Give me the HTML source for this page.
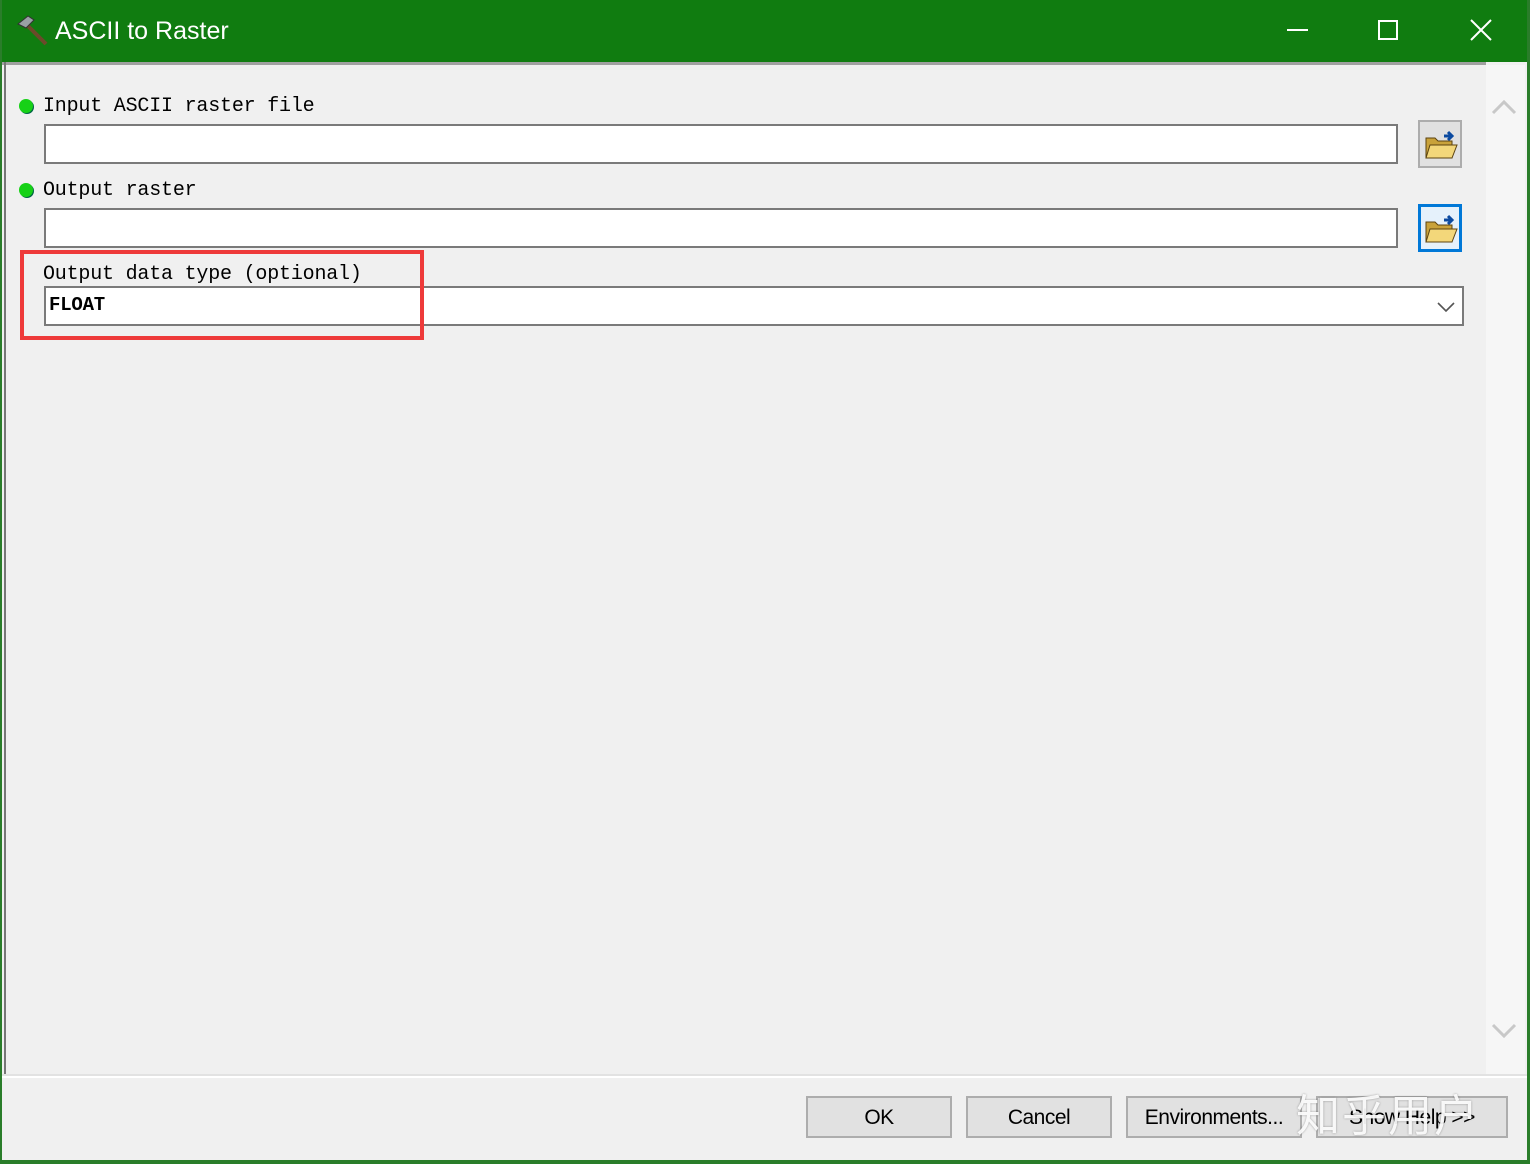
<!DOCTYPE html>
<html><head><meta charset="utf-8"><style>
*{margin:0;padding:0;box-sizing:border-box}
body{width:1530px;height:1164px;background:#f0f0f0;position:relative;overflow:hidden;font-family:"Liberation Sans",sans-serif}
.a{position:absolute}
.lbl{position:absolute;font-family:"Liberation Mono","Noto Serif CJK SC",monospace;font-size:20px;color:#000;letter-spacing:-0.2px}
.box{position:absolute;background:#fff;border:2px solid #7a7a7a}
.dot{position:absolute;width:14px;height:14px;border-radius:50%;background:#17d117;box-shadow:1px 1px 0 #064}
.btn{position:absolute;top:1096px;height:42px;background:#e1e1e1;border:2px solid #adadad;font-size:21px;color:#000;text-align:center;line-height:40px;letter-spacing:-0.5px}
</style></head><body>
<div class="a" style="left:0;top:0;width:1530px;height:62px;background:#107c10"></div>
<div class="a" style="left:0;top:0;width:2px;height:1164px;background:#2a7d2a"></div>
<div class="a" style="left:1527px;top:0;width:3px;height:1164px;background:#2a7d2a"></div>
<div class="a" style="left:0;top:1160px;width:1530px;height:4px;background:#2a7d2a"></div>
<svg class="a" style="left:16px;top:14px" width="34" height="32" viewBox="0 0 34 32"><path d="M12 12 L30 30" stroke="#6b4a2a" stroke-width="4"/><path d="M2 10 L12 2 L18 6 L10 14 Z" fill="#9aa0a6" stroke="#333" stroke-width="1"/></svg>
<div class="a" style="left:55px;top:17px;color:#fff;font-size:25px">ASCII to Raster</div>
<div class="a" style="left:1287px;top:29px;width:21px;height:2px;background:#fff"></div>
<div class="a" style="left:1378px;top:20px;width:20px;height:20px;border:2px solid #fff"></div>
<svg class="a" style="left:1470px;top:19px" width="22" height="22"><path d="M1 1L21 21M21 1L1 21" stroke="#fff" stroke-width="2"/></svg>
<div class="a" style="left:2px;top:62px;width:1484px;height:3px;background:#a0a0a0"></div>
<div class="a" style="left:4px;top:62px;width:2px;height:1012px;background:#777"></div>
<div class="a" style="left:1486px;top:65px;width:39px;height:1009px;background:#f6f6f6"></div>
<svg class="a" style="left:1491px;top:98px" width="26" height="18"><path d="M2 15L13 4L24 15" stroke="#c8c8c8" stroke-width="3" fill="none"/></svg>
<svg class="a" style="left:1491px;top:1022px" width="26" height="18"><path d="M2 3L13 14L24 3" stroke="#c8c8c8" stroke-width="3" fill="none"/></svg>
<div class="a" style="left:2px;top:1074px;width:1525px;height:2px;background:#e2e2e2"></div>
<div class="a" style="left:2px;top:1076px;width:1525px;height:2px;background:#fff"></div>

<div class="dot" style="left:19px;top:99px"></div>
<div class="lbl" style="left:43px;top:95px">Input ASCII raster file</div>
<div class="box" style="left:44px;top:124px;width:1354px;height:40px"></div>
<div class="dot" style="left:19px;top:183px"></div>
<div class="lbl" style="left:43px;top:179px">Output raster</div>
<div class="box" style="left:44px;top:208px;width:1354px;height:40px"></div>
<div class="lbl" style="left:43px;top:263px">Output data type (optional)</div>
<div class="box" style="left:44px;top:286px;width:1420px;height:40px"></div>
<div class="lbl" style="left:49px;top:294px;font-weight:bold;font-size:19px">FLOAT</div>
<svg class="a" style="left:1437px;top:301px" width="18" height="12"><path d="M1 2L9 10L17 2" stroke="#555" stroke-width="1.6" fill="none"/></svg>
<div class="a" style="left:20px;top:250px;width:404px;height:90px;border:4px solid #ee3a3a"></div>

<div class="a" style="left:1418px;top:120px;width:44px;height:48px;background:#e1e1e1;border:2px solid #adadad"></div>
<div class="a" style="left:1418px;top:204px;width:44px;height:48px;background:#e5f1fb;border:3px solid #0078d7"></div>
<svg class="a" style="left:1424px;top:128px" width="34" height="34" viewBox="0 0 34 34"><path d="M2 10h9l3 3h14v17H2z" fill="#c9a23a" stroke="#5c4310"/><path d="M2 30L6 17h27l-5 13z" fill="#f3d77a" stroke="#5c4310"/><path d="M20 8h7M24 4l4 4-4 4" stroke="#0b4aa0" stroke-width="3" fill="none"/></svg>
<svg class="a" style="left:1424px;top:212px" width="34" height="34" viewBox="0 0 34 34"><path d="M2 10h9l3 3h14v17H2z" fill="#c9a23a" stroke="#5c4310"/><path d="M2 30L6 17h27l-5 13z" fill="#f3d77a" stroke="#5c4310"/><path d="M20 8h7M24 4l4 4-4 4" stroke="#0b4aa0" stroke-width="3" fill="none"/></svg>

<div class="btn" style="left:806px;width:146px">OK</div>
<div class="btn" style="left:966px;width:146px">Cancel</div>
<div class="btn" style="left:1126px;width:176px">Environments...</div>
<div class="btn" style="left:1316px;width:192px">Show Help &gt;&gt;</div>
<div class="a" style="left:1296px;top:1080px;font-family:'Noto Sans CJK SC',sans-serif;font-size:44px;color:rgba(255,255,255,0.92);text-shadow:0 0 2px rgba(0,0,0,0.35);letter-spacing:2px">知乎用户</div>
</body></html>
